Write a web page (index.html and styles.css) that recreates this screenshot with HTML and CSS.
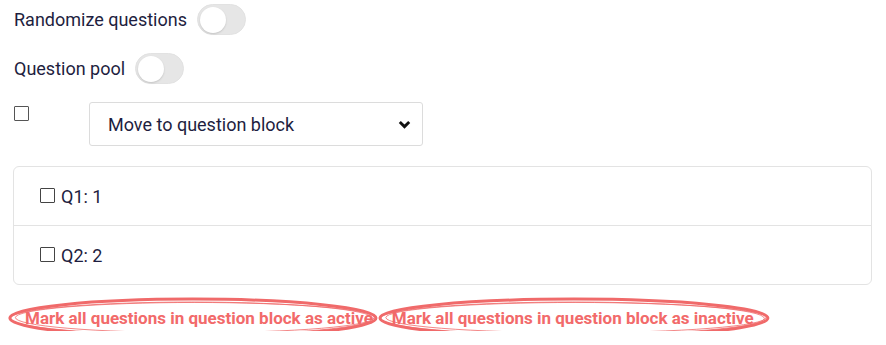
FILE: index.html
```html
<!DOCTYPE html>
<html>
<head>
<meta charset="utf-8">
<link rel="stylesheet" href="styles.css">
</head>
<body>
<div class="page">
  <div class="toggle-row first">
    <span class="label">Randomize questions</span>
    <span class="switch"><span class="knob"></span></span>
  </div>
  <div class="toggle-row second">
    <span class="label">Question pool</span>
    <span class="switch"><span class="knob"></span></span>
  </div>
  <div class="move-row">
    <span class="box"></span>
    <div class="select">
      <span>Move to question block</span>
      <svg class="chev" width="13" height="9" viewBox="0 0 13 9"><path d="M1.8 2 L6.5 6.6 L11.2 2" fill="none" stroke="#111" stroke-width="2.9" stroke-linejoin="miter"/></svg>
    </div>
  </div>
  <div class="card">
    <div class="qrow"><span class="box small"></span><span class="qtext">Q1: 1</span></div>
    <div class="qrow"><span class="box small"></span><span class="qtext">Q2: 2</span></div>
  </div>
  <div class="actions">
    <span class="mark first-mark">Mark all questions in question block as active
      <svg class="ring" preserveAspectRatio="none"><ellipse cx="50%" cy="50%" rx="49.5%" ry="45%" class="thick"/><ellipse cx="50.5%" cy="49%" rx="48.5%" ry="36%" class="thin"/><ellipse cx="49.6%" cy="51%" rx="49%" ry="39%" class="thin"/></svg>
    </span>
    <span class="mark second-mark">Mark all questions in question block as inactive
      <svg class="ring" preserveAspectRatio="none"><ellipse cx="50%" cy="50%" rx="49.5%" ry="45%" class="thick"/><ellipse cx="50.5%" cy="49%" rx="48.5%" ry="36%" class="thin"/><ellipse cx="49.6%" cy="51%" rx="49%" ry="39%" class="thin"/></svg>
    </span>
  </div>
</div>
</body>
</html>
```
FILE: styles.css
```css
html, body {
  margin: 0;
  padding: 0;
  background: #fff;
}
body {
  font-family: Roboto, "Liberation Sans", sans-serif;
  color: #1e1e40;
}
.page {
  padding-left: 14px;
  padding-top: 4px;
  width: 858px;
}
.toggle-row {
  display: flex;
  align-items: center;
  height: 31px;
  gap: 10px;
}
.toggle-row.second {
  margin-top: 18px;
}
.label {
  font-size: 18px;
}
.switch {
  width: 49px;
  height: 31px;
  border-radius: 16px;
  background: #e6e6e6;
  box-sizing: border-box;
  border: 1px solid #e2e2e2;
  display: flex;
  align-items: center;
  padding-left: 2px;
}
.knob {
  width: 26px;
  height: 26px;
  border-radius: 50%;
  background: #fff;
  box-shadow: 0 1px 2px rgba(0,0,0,0.15);
}
.move-row {
  display: flex;
  align-items: flex-start;
  margin-top: 18px;
}
.box {
  display: inline-block;
  width: 13px;
  height: 13px;
  border: 1px solid #444;
  border-radius: 1px;
  box-sizing: border-box;
  background: #fff;
}
.move-row .box {
  width: 15px;
  height: 15px;
  margin-top: 4px;
  margin-right: 60px;
  border-color: #555;
}
.select {
  width: 334px;
  height: 44px;
  box-sizing: border-box;
  border: 1px solid #dcdcdc;
  border-radius: 3px;
  display: flex;
  align-items: center;
  justify-content: space-between;
  padding: 0 11px 0 18px;
  font-size: 18px;
}
.card {
  margin-top: 20px;
  margin-left: -1px;
  border: 1px solid #e3e3e3;
  border-radius: 6px;
}
.qrow {
  height: 58px;
  display: flex;
  align-items: center;
  padding-left: 26px;
  gap: 6px;
  font-size: 18px;
}
.qrow + .qrow {
  border-top: 1px solid #e3e3e3;
}
.qrow .box.small {
  width: 15px;
  height: 15px;
  margin-top: -2px;
}
.actions {
  display: flex;
  gap: 19px;
  margin-top: 20px;
  padding-left: 11px;
}
.mark {
  position: relative;
  font-size: 17px;
  font-weight: 700;
  color: #f26a6a;
  height: 26px;
  line-height: 26px;
  padding: 0;
  white-space: nowrap;
}
.ring {
  position: absolute;
  left: -17px;
  top: -8px;
  width: calc(100% + 22px);
  height: calc(100% + 16px);
  overflow: visible;
  pointer-events: none;
}
.second-mark .ring {
  left: -14px;
  width: calc(100% + 30px);
}
.ring ellipse {
  fill: none;
  stroke: #f06a6a;
}
.ring .thick {
  stroke-width: 3;
}
.ring .thin {
  stroke-width: 1;
  opacity: 0.8;
}
```
